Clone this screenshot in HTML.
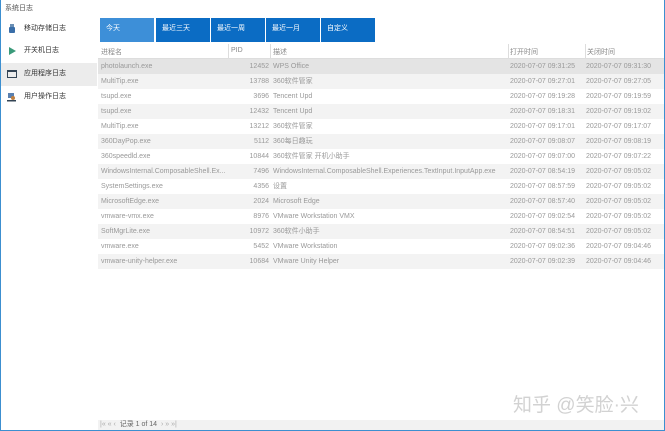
<!DOCTYPE html>
<html><head><meta charset="utf-8"><style>
*{margin:0;padding:0;box-sizing:border-box}
body{width:665px;height:431px;overflow:hidden;background:#fff;font-family:"Liberation Sans","Noto Sans CJK SC",sans-serif;font-size:7px;color:#777;position:relative}
.win{position:absolute;left:0;top:0;width:665px;height:431px;border:1px solid #3c8fd0;border-top:none}
.title{position:absolute;left:5px;top:3px;font-size:7px;color:#555}
.side{position:absolute;left:1px;top:18px;width:96px;height:412px;background:#fff}
.it{position:absolute;left:0;width:96px;height:22px;line-height:22px;padding-left:23px;color:#333;font-size:7px}
.it.sel{background:#ececec}
.ic{position:absolute;left:6px;top:6px;width:10px;height:10px}
.tab{position:absolute;top:18px;height:24px;width:54px;background:#0b6cc4;color:#fff;line-height:21px;padding-left:6px;font-size:7px}
.tab.a{background:#3d8fd8}
.hdr{position:absolute;top:44px;left:98px;width:566px;height:15px;border-bottom:1px solid #ddd;color:#888}
.hdr span{position:absolute;top:3px}
.sep{position:absolute;top:0;width:1px;height:14px;background:#ddd}
.row{position:absolute;left:98px;width:566px;height:15px;line-height:15px;color:#999}
.row span{position:absolute;white-space:nowrap}
.c1{left:3px}.c2{right:395px;text-align:right}.c3{left:175px}.c4{left:412px}.c5{left:488px}
.foot{position:absolute;left:98px;top:420px;width:566px;height:10px;background:#f2f2f2;color:#666;font-size:7px;line-height:10px;padding-left:2px}
.wm{position:absolute;left:513px;top:390px;font-size:19px;color:#d2d2d2}
</style></head><body>
<div class="win"></div>
<div class="title">系统日志</div>
<div class="side">
 <div class="it" style="top:0"><svg class="ic" viewBox="0 0 10 10"><rect x="3" y="0" width="4" height="3" fill="#6a8fb5"/><rect x="2" y="3" width="6" height="6" rx="1" fill="#3a6ea8"/></svg>移动存储日志</div>
 <div class="it" style="top:22px"><svg class="ic" viewBox="0 0 10 10"><path d="M2 1L9 5L2 9Z" fill="#3a9a7a"/></svg>开关机日志</div>
 <div class="it sel" style="top:45px;height:23px"><svg class="ic" viewBox="0 0 10 10"><rect x="0.5" y="1.5" width="9" height="7" fill="none" stroke="#345" stroke-width="1"/><rect x="0.5" y="1.5" width="9" height="1.5" fill="#345"/></svg>应用程序日志</div>
 <div class="it" style="top:68px"><svg class="ic" viewBox="0 0 10 10"><rect x="1" y="1" width="6" height="5" fill="#5a80b0"/><circle cx="6" cy="6" r="2" fill="#c08040"/><rect x="0" y="8" width="9" height="1.5" fill="#345"/></svg>用户操作日志</div>
</div>
<div class="tab a" style="left:100px">今天</div>
<div class="tab" style="left:156px">最近三天</div>
<div class="tab" style="left:211px">最近一周</div>
<div class="tab" style="left:266px">最近一月</div>
<div class="tab" style="left:321px">自定义</div>
<div class="hdr">
 <span style="left:3px">进程名</span><div class="sep" style="left:130px"></div>
 <span style="left:133px">PID</span><div class="sep" style="left:172px"></div>
 <span style="left:175px">描述</span><div class="sep" style="left:410px"></div>
 <span style="left:412px">打开时间</span><div class="sep" style="left:487px"></div>
 <span style="left:489px">关闭时间</span>
</div>
<div class="row" style="top:59px;background:#e4e4e4"><span class="c1">photolaunch.exe</span><span class="c2">12452</span><span class="c3">WPS Office</span><span class="c4">2020-07-07 09:31:25</span><span class="c5">2020-07-07 09:31:30</span></div>
<div class="row" style="top:74px;background:#f3f3f3"><span class="c1">MultiTip.exe</span><span class="c2">13788</span><span class="c3">360软件管家</span><span class="c4">2020-07-07 09:27:01</span><span class="c5">2020-07-07 09:27:05</span></div>
<div class="row" style="top:89px"><span class="c1">tsupd.exe</span><span class="c2">3696</span><span class="c3">Tencent Upd</span><span class="c4">2020-07-07 09:19:28</span><span class="c5">2020-07-07 09:19:59</span></div>
<div class="row" style="top:104px;background:#f3f3f3"><span class="c1">tsupd.exe</span><span class="c2">12432</span><span class="c3">Tencent Upd</span><span class="c4">2020-07-07 09:18:31</span><span class="c5">2020-07-07 09:19:02</span></div>
<div class="row" style="top:119px"><span class="c1">MultiTip.exe</span><span class="c2">13212</span><span class="c3">360软件管家</span><span class="c4">2020-07-07 09:17:01</span><span class="c5">2020-07-07 09:17:07</span></div>
<div class="row" style="top:134px;background:#f3f3f3"><span class="c1">360DayPop.exe</span><span class="c2">5112</span><span class="c3">360每日趣玩</span><span class="c4">2020-07-07 09:08:07</span><span class="c5">2020-07-07 09:08:19</span></div>
<div class="row" style="top:149px"><span class="c1">360speedld.exe</span><span class="c2">10844</span><span class="c3">360软件管家 开机小助手</span><span class="c4">2020-07-07 09:07:00</span><span class="c5">2020-07-07 09:07:22</span></div>
<div class="row" style="top:164px;background:#f3f3f3"><span class="c1">WindowsInternal.ComposableShell.Ex...</span><span class="c2">7496</span><span class="c3">WindowsInternal.ComposableShell.Experiences.TextInput.InputApp.exe</span><span class="c4">2020-07-07 08:54:19</span><span class="c5">2020-07-07 09:05:02</span></div>
<div class="row" style="top:179px"><span class="c1">SystemSettings.exe</span><span class="c2">4356</span><span class="c3">设置</span><span class="c4">2020-07-07 08:57:59</span><span class="c5">2020-07-07 09:05:02</span></div>
<div class="row" style="top:194px;background:#f3f3f3"><span class="c1">MicrosoftEdge.exe</span><span class="c2">2024</span><span class="c3">Microsoft Edge</span><span class="c4">2020-07-07 08:57:40</span><span class="c5">2020-07-07 09:05:02</span></div>
<div class="row" style="top:209px"><span class="c1">vmware-vmx.exe</span><span class="c2">8976</span><span class="c3">VMware Workstation VMX</span><span class="c4">2020-07-07 09:02:54</span><span class="c5">2020-07-07 09:05:02</span></div>
<div class="row" style="top:224px;background:#f3f3f3"><span class="c1">SoftMgrLite.exe</span><span class="c2">10972</span><span class="c3">360软件小助手</span><span class="c4">2020-07-07 08:54:51</span><span class="c5">2020-07-07 09:05:02</span></div>
<div class="row" style="top:239px"><span class="c1">vmware.exe</span><span class="c2">5452</span><span class="c3">VMware Workstation</span><span class="c4">2020-07-07 09:02:36</span><span class="c5">2020-07-07 09:04:46</span></div>
<div class="row" style="top:254px;background:#f3f3f3"><span class="c1">vmware-unity-helper.exe</span><span class="c2">10684</span><span class="c3">VMware Unity Helper</span><span class="c4">2020-07-07 09:02:39</span><span class="c5">2020-07-07 09:04:46</span></div>
<div class="wm">知乎 @笑脸·兴</div>
<div class="foot"><span style="color:#aaa">|« « ‹</span> &nbsp;记录 1 of 14 &nbsp;<span style="color:#aaa">› » »|</span></div>
</body></html>
